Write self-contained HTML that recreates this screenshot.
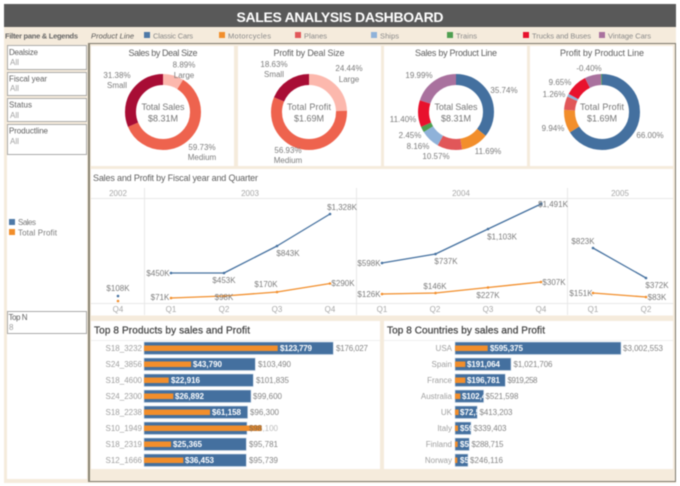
<!DOCTYPE html>
<html>
<head>
<meta charset="utf-8">
<style>
html,body{margin:0;padding:0;background:#fff;width:680px;height:486px;overflow:hidden}
svg{display:block;filter:blur(.4px)}
text{font-family:"Liberation Sans",sans-serif;font-size:8px;fill:#7c7c7c}
.c{text-anchor:middle}
.r{text-anchor:end}
.t{font-size:9px;fill:#5f5f5f}
.h{font-size:10px;fill:#444;stroke:#444;stroke-width:.25px}
.y{fill:#a8a8a8}
.f{fill:#5f5f5f}
.a{fill:#a0a0a0}
.w{fill:#fff;font-weight:bold;font-size:8px}
.l{fill:#a0a0a0}
.v{fill:#858585}
.k{font-size:9px;fill:#777}
.g{font-size:7.5px;fill:#888}
</style>
</head>
<body>
<svg width="680" height="486" viewBox="0 0 680 486" xmlns="http://www.w3.org/2000/svg">
<defs>
<clipPath id="c1"><rect x="455" y="390" width="28.5" height="13"/></clipPath>
<clipPath id="c2"><rect x="455" y="406" width="22" height="13"/></clipPath>
<clipPath id="c3"><rect x="455" y="422" width="16" height="13"/></clipPath>
<clipPath id="c4"><rect x="455" y="438" width="14" height="13"/></clipPath>
<clipPath id="c5"><rect x="455" y="454" width="13" height="13"/></clipPath>
</defs>
<rect width="680" height="486" fill="#fff"/>
<rect x="4" y="27" width="672" height="456" fill="#f5ebdc"/>
<rect x="4" y="4" width="672" height="23" fill="#595959"/>
<text x="340" y="22" class="c" style="font-size:14px;font-weight:bold;fill:#fff" textLength="207" lengthAdjust="spacing">SALES ANALYSIS DASHBOARD</text>

<!-- legend strip -->
<text x="5" y="38.500" style="font-size:7.5px;font-weight:bold;fill:#666" textLength="73">Filter pane &amp; Legends</text>
<text x="91" y="38.500" style="font-size:7.5px;font-style:italic;fill:#555" textLength="43">Product Line</text>
<rect x="144" y="32" width="6" height="6" fill="#4e79a7"/><text x="153" y="38.500" class="g" textLength="40">Classic Cars</text>
<rect x="219" y="32" width="6" height="6" fill="#f28e2b"/><text x="228" y="38.500" class="g" textLength="43">Motorcycles</text>
<rect x="295" y="32" width="6" height="6" fill="#e15759"/><text x="304" y="38.500" class="g" textLength="23">Planes</text>
<rect x="371" y="32" width="6" height="6" fill="#8fb2d9"/><text x="380" y="38.500" class="g" textLength="19">Ships</text>
<rect x="447" y="32" width="6" height="6" fill="#4e9f50"/><text x="456" y="38.500" class="g" textLength="21">Trains</text>
<rect x="523" y="32" width="6" height="6" fill="#e8112d"/><text x="532" y="38.500" class="g" textLength="59">Trucks and Buses</text>
<rect x="599" y="32" width="6" height="6" fill="#a9719e"/><text x="608" y="38.500" class="g" textLength="43">Vintage Cars</text>

<!-- left column -->
<rect x="7" y="45" width="80" height="434" fill="#fff"/>
<rect x="7.5" y="45.5" width="79" height="24" fill="#fff" stroke="#aaa"/>
<rect x="7" y="70" width="80" height="2" fill="#f5ebdc"/>
<rect x="7.5" y="72.5" width="79" height="23" fill="#fff" stroke="#aaa"/>
<rect x="7" y="96" width="80" height="2" fill="#f5ebdc"/>
<rect x="7.5" y="98.5" width="79" height="23" fill="#fff" stroke="#aaa"/>
<rect x="7" y="122" width="80" height="2" fill="#f5ebdc"/>
<rect x="7.5" y="124.5" width="79" height="30" fill="#fff" stroke="#aaa"/>
<text x="9" y="55" class="f" textLength="29">Dealsize</text><text x="10" y="65" class="a">All</text>
<text x="9" y="81.500" class="f" textLength="38">Fiscal  year</text><text x="10" y="91" class="a">All</text>
<text x="9" y="107.500" class="f" textLength="23">Status</text><text x="10" y="118" class="a">All</text>
<text x="9" y="133.500" class="f" textLength="39">Productline</text><text x="10" y="144" class="a">All</text>
<rect x="9" y="219" width="6" height="6" fill="#4e79a7"/><text x="18" y="225" textLength="18">Sales</text>
<rect x="9" y="229" width="6" height="6" fill="#f28e2b"/><text x="18" y="235.500" textLength="39">Total Profit</text>
<rect x="7.5" y="311.500" width="79" height="22" fill="#fff" stroke="#aaa"/>
<text x="8.500" y="320" class="f" textLength="19">Top N</text><text x="9" y="330" class="a">8</text>

<!-- main frame -->
<rect x="88.500" y="43.500" width="587" height="438" fill="#f5ebdc" stroke="#7d786c"/>
<rect x="88" y="43" width="2" height="439" fill="#8a8474"/>

<!-- donut panels -->
<rect x="91" y="46" width="143" height="120" fill="#fff"/>
<rect x="238" y="46" width="143" height="120" fill="#fff"/>
<rect x="384" y="46" width="143" height="120" fill="#fff"/>
<rect x="530" y="46" width="143" height="120" fill="#fff"/>

<g fill="none" stroke-width="11">
<g transform="rotate(-90 163 112)">
<circle cx="163" cy="112" r="32.500" pathLength="100" stroke="#fcb8ad" stroke-dasharray="8.89 91.11"/>
<circle cx="163" cy="112" r="32.500" pathLength="100" stroke="#ee634e" stroke-dasharray="59.73 40.27" stroke-dashoffset="-8.89"/>
<circle cx="163" cy="112" r="32.500" pathLength="100" stroke="#a80d35" stroke-dasharray="31.38 68.62" stroke-dashoffset="-68.62"/>
</g>
<g transform="rotate(-90 309 112)">
<circle cx="309" cy="112" r="32.500" pathLength="100" stroke="#fcb8ad" stroke-dasharray="24.44 75.56"/>
<circle cx="309" cy="112" r="32.500" pathLength="100" stroke="#ee634e" stroke-dasharray="56.93 43.07" stroke-dashoffset="-24.44"/>
<circle cx="309" cy="112" r="32.500" pathLength="100" stroke="#a80d35" stroke-dasharray="18.63 81.37" stroke-dashoffset="-81.37"/>
</g>
<g transform="rotate(-90 456 112)">
<circle cx="456" cy="112" r="32.500" pathLength="100" stroke="#44709f" stroke-dasharray="35.74 64.26"/>
<circle cx="456" cy="112" r="32.500" pathLength="100" stroke="#f28e2b" stroke-dasharray="11.69 88.31" stroke-dashoffset="-35.74"/>
<circle cx="456" cy="112" r="32.500" pathLength="100" stroke="#e15759" stroke-dasharray="10.57 89.43" stroke-dashoffset="-47.43"/>
<circle cx="456" cy="112" r="32.500" pathLength="100" stroke="#8fb2d9" stroke-dasharray="8.16 91.84" stroke-dashoffset="-58"/>
<circle cx="456" cy="112" r="32.500" pathLength="100" stroke="#4e9f50" stroke-dasharray="2.45 97.55" stroke-dashoffset="-66.16"/>
<circle cx="456" cy="112" r="32.500" pathLength="100" stroke="#e8112d" stroke-dasharray="11.4 88.6" stroke-dashoffset="-68.61"/>
<circle cx="456" cy="112" r="32.500" pathLength="100" stroke="#a9719e" stroke-dasharray="19.99 80.01" stroke-dashoffset="-80.01"/>
</g>
<g transform="rotate(-90 602 112)">
<circle cx="602" cy="112" r="32.500" pathLength="100" stroke="#44709f" stroke-dasharray="66 34"/>
<circle cx="602" cy="112" r="32.500" pathLength="100" stroke="#f28e2b" stroke-dasharray="9.94 90.06" stroke-dashoffset="-66"/>
<circle cx="602" cy="112" r="32.500" pathLength="100" stroke="#e15759" stroke-dasharray="5.75 94.25" stroke-dashoffset="-75.94"/>
<circle cx="602" cy="112" r="32.500" pathLength="100" stroke="#8fb2d9" stroke-dasharray="1.26 98.74" stroke-dashoffset="-81.69"/>
<circle cx="602" cy="112" r="32.500" pathLength="100" stroke="#e8112d" stroke-dasharray="9.65 90.35" stroke-dashoffset="-82.95"/>
<circle cx="602" cy="112" r="32.500" pathLength="100" stroke="#a9719e" stroke-dasharray="7 93" stroke-dashoffset="-92.6"/>
<circle cx="602" cy="112" r="32.500" pathLength="100" stroke="#4e9f50" stroke-dasharray="0.4 99.6" stroke-dashoffset="-99.6"/>
</g>
</g>

<text x="163" y="56" class="c t" textLength="69">Sales by Deal Size</text>
<text x="184" y="67.500" class="c">8.89%</text><text x="184" y="78" class="c">Large</text>
<text x="117" y="78" class="c">31.38%</text><text x="117" y="88" class="c">Small</text>
<text x="202" y="150" class="c">59.73%</text><text x="202" y="160" class="c">Medium</text>
<text x="163" y="110" class="c k" textLength="43">Total Sales</text><text x="163" y="121.500" class="c k">$8.31M</text>

<text x="309" y="56" class="c t" textLength="71">Profit by Deal Size</text>
<text x="274" y="67" class="c">18.63%</text><text x="274" y="77" class="c">Small</text>
<text x="349" y="71" class="c">24.44%</text><text x="349" y="82" class="c">Large</text>
<text x="288" y="153" class="c">56.93%</text><text x="288" y="163" class="c">Medium</text>
<text x="309" y="110" class="c k" textLength="44">Total Profit</text><text x="309" y="121.500" class="c k">$1.69M</text>

<text x="456" y="56" class="c t" textLength="82">Sales by Product Line</text>
<text x="419" y="78" class="c">19.99%</text>
<text x="504" y="93" class="c">35.74%</text>
<text x="403" y="122" class="c">11.40%</text>
<text x="410" y="138" class="c">2.45%</text>
<text x="418" y="149" class="c">8.16%</text>
<text x="436" y="159" class="c">10.57%</text>
<text x="488" y="154" class="c">11.69%</text>
<text x="456" y="110" class="c k" textLength="43">Total Sales</text><text x="456" y="121.500" class="c k">$8.31M</text>

<text x="602" y="56" class="c t" textLength="84">Profit by Product Line</text>
<text x="589" y="71" class="c">-0.40%</text>
<text x="560" y="85" class="c">9.65%</text>
<text x="554" y="97" class="c">1.26%</text>
<text x="553" y="131" class="c">9.94%</text>
<text x="650" y="138" class="c">66.00%</text>
<text x="602" y="110" class="c k" textLength="44">Total Profit</text><text x="602" y="121.500" class="c k">$1.69M</text>

<!-- line panel -->
<rect x="91" y="169" width="582" height="146.500" fill="#fff"/>
<text x="93" y="181" class="t" textLength="165">Sales and Profit by Fiscal year and Quarter</text>
<g stroke="#e8e8e8" stroke-width="1">
<line x1="91" y1="198.500" x2="673" y2="198.500"/>
<line x1="91" y1="303.500" x2="673" y2="303.500"/>
<line x1="144.500" y1="188" x2="144.500" y2="315"/>
<line x1="356.500" y1="188" x2="356.500" y2="315"/>
<line x1="567.500" y1="188" x2="567.500" y2="315"/>
</g>
<text x="118" y="196" class="c y">2002</text>
<text x="250" y="196" class="c y">2003</text>
<text x="461" y="196" class="c y">2004</text>
<text x="620" y="196" class="c y">2005</text>
<g class="qs">
<text x="118" y="312" class="c y">Q4</text>
<text x="171" y="312" class="c y">Q1</text>
<text x="224" y="312" class="c y">Q2</text>
<text x="277" y="312" class="c y">Q3</text>
<text x="330" y="312" class="c y">Q4</text>
<text x="382" y="312" class="c y">Q1</text>
<text x="435" y="312" class="c y">Q2</text>
<text x="488" y="312" class="c y">Q3</text>
<text x="541" y="312" class="c y">Q4</text>
<text x="593" y="312" class="c y">Q1</text>
<text x="646" y="312" class="c y">Q2</text>
</g>
<g fill="none" stroke-width="1.300" stroke-linejoin="round">
<polyline points="171,273 224,273 277,246 330,214" stroke="#44709f"/>
<polyline points="382,263 435.500,254 488,229 541,204" stroke="#44709f"/>
<polyline points="593,248 646,278" stroke="#44709f"/>
<polyline points="171,298 224,296 277,292 330,283.500" stroke="#f28e2b"/>
<polyline points="382,294 435.500,293 488,287.500 541,282" stroke="#f28e2b"/>
<polyline points="593,293 646,297" stroke="#f28e2b"/>
</g>
<g fill="#44709f">
<circle cx="118" cy="296" r="1.300"/><circle cx="171" cy="273" r="1.300"/><circle cx="224" cy="273" r="1.300"/><circle cx="277" cy="246" r="1.300"/><circle cx="330" cy="214" r="1.300"/>
<circle cx="382" cy="263" r="1.300"/><circle cx="435.500" cy="254" r="1.300"/><circle cx="488" cy="229" r="1.300"/><circle cx="541" cy="204" r="1.600"/><circle cx="593" cy="248" r="1.300"/><circle cx="646" cy="278" r="1.300"/>
</g>
<g fill="#f28e2b">
<circle cx="118" cy="301" r="1.300"/><circle cx="171" cy="298" r="1.300"/><circle cx="224" cy="296" r="1.300"/><circle cx="277" cy="292" r="1.300"/><circle cx="330" cy="283.500" r="1.300"/>
<circle cx="382" cy="294" r="1.300"/><circle cx="435.500" cy="293" r="1.300"/><circle cx="488" cy="287.500" r="1.300"/><circle cx="541" cy="282" r="1.300"/><circle cx="593" cy="293" r="1.300"/><circle cx="646" cy="297" r="1.300"/>
</g>
<g>
<text x="118" y="291" class="c">$108K</text>
<text x="158" y="276" class="c">$450K</text>
<text x="224" y="283" class="c">$453K</text>
<text x="288" y="256" class="c">$843K</text>
<text x="342" y="210" class="c">$1,328K</text>
<text x="160" y="300" class="c">$71K</text>
<text x="224" y="300" class="c">$98K</text>
<text x="266" y="287" class="c">$170K</text>
<text x="343" y="286" class="c">$290K</text>
<text x="369" y="266" class="c">$598K</text>
<text x="446" y="264" class="c">$737K</text>
<text x="502" y="239.500" class="c">$1,103K</text>
<text x="553" y="207" class="c">$1,491K</text>
<text x="369" y="297" class="c">$126K</text>
<text x="435" y="289" class="c">$146K</text>
<text x="488" y="298" class="c">$227K</text>
<text x="554" y="285" class="c">$307K</text>
<text x="583" y="244" class="c">$823K</text>
<text x="657" y="288" class="c">$372K</text>
<text x="581" y="296" class="c">$151K</text>
<text x="657" y="300" class="c">$83K</text>
</g>

<!-- bottom panels -->
<rect x="91" y="321" width="289" height="148" fill="#fff"/>
<rect x="384" y="321" width="289" height="148" fill="#fff"/>
<line x1="91" y1="340.500" x2="380" y2="340.500" stroke="#f0f0f0"/>
<line x1="384" y1="340.500" x2="673" y2="340.500" stroke="#f0f0f0"/>
<text x="94" y="333.500" class="h" textLength="156">Top 8  Products by sales and Profit</text>
<text x="387" y="333.500" class="h" textLength="158">Top 8 Countries by sales and Profit</text>

<g fill="#44709f" stroke="#cfdcea" stroke-width=".6">
<rect x="144" y="342" width="189.300" height="12.500"/>
<rect x="144" y="358" width="111.300" height="12.500"/>
<rect x="144" y="374" width="109.300" height="12.500"/>
<rect x="144" y="390" width="107" height="12.500"/>
<rect x="144" y="406" width="103.700" height="12.500"/>
<rect x="144" y="422" width="103" height="12.500"/>
<rect x="144" y="438" width="102.300" height="12.500"/>
<rect x="144" y="454" width="102.300" height="12.500"/>
<rect x="455" y="342" width="166" height="12.500"/>
<rect x="455" y="358" width="56" height="12.500"/>
<rect x="455" y="374" width="50.300" height="12.500"/>
<rect x="455" y="390" width="28.700" height="12.500"/>
<rect x="455" y="406" width="22.300" height="12.500"/>
<rect x="455" y="422" width="16" height="12.500"/>
<rect x="455" y="438" width="14.300" height="12.500"/>
<rect x="455" y="454" width="13" height="12.500"/>
</g>
<g fill="#f28e2b">
<rect x="144" y="345.500" width="133.700" height="5.500"/>
<rect x="144" y="361.500" width="47" height="5.500"/>
<rect x="144" y="377.500" width="24.700" height="5.500"/>
<rect x="144" y="393.500" width="29.300" height="5.500"/>
<rect x="144" y="409.500" width="66" height="5.500"/>
<rect x="144" y="425.500" width="117.700" height="5.500"/>
<rect x="144" y="441.500" width="27" height="5.500"/>
<rect x="144" y="457.500" width="39.300" height="5.500"/>
<rect x="455" y="345.500" width="32.700" height="5.500"/>
<rect x="455" y="361.500" width="10.300" height="5.500"/>
<rect x="455" y="377.500" width="10.300" height="5.500"/>
<rect x="455" y="393.500" width="5.300" height="5.500"/>
<rect x="455" y="409.500" width="3.700" height="5.500"/>
<rect x="455" y="425.500" width="3" height="5.500"/>
<rect x="455" y="441.500" width="2.700" height="5.500"/>
<rect x="455" y="457.500" width="2.300" height="5.500"/>
</g>

<g class="lbl">
<text x="142" y="351" class="r l">S18_3232</text>
<text x="142" y="367" class="r l">S24_3856</text>
<text x="142" y="383" class="r l">S18_4600</text>
<text x="142" y="399" class="r l">S24_2300</text>
<text x="142" y="415" class="r l">S18_2238</text>
<text x="142" y="431" class="r l">S10_1949</text>
<text x="142" y="447" class="r l">S18_2319</text>
<text x="142" y="463" class="r l">S12_1666</text>
<text x="280" y="351" class="w" textLength="32">$123,779</text>
<text x="193" y="367" class="w" textLength="29">$43,790</text>
<text x="171" y="383" class="w" textLength="29">$22,916</text>
<text x="175" y="399" class="w" textLength="29">$26,892</text>
<text x="212" y="415" class="w" textLength="29">$61,158</text>
<text x="249" y="431" style="fill:#b3691c;font-weight:bold" textLength="13">$98</text>
<text x="173" y="447" class="w" textLength="29">$25,365</text>
<text x="185" y="463" class="w" textLength="29">$36,453</text>
<text x="336" y="351" class="v" textLength="32">$176,027</text>
<text x="258" y="367" class="v" textLength="33">$103,490</text>
<text x="256" y="383" class="v" textLength="33">$101,835</text>
<text x="253" y="399" class="v" textLength="29">$99,600</text>
<text x="250" y="415" class="v" textLength="29">$96,300</text>
<text x="249" y="431" class="v" style="opacity:.55" textLength="29">$96,100</text>
<text x="249" y="447" class="v" textLength="29">$95,781</text>
<text x="249" y="463" class="v" textLength="29">$95,739</text>

<text x="452" y="351" class="r l">USA</text>
<text x="452" y="367" class="r l">Spain</text>
<text x="452" y="383" class="r l">France</text>
<text x="452" y="399" class="r l">Australia</text>
<text x="452" y="415" class="r l">UK</text>
<text x="452" y="431" class="r l">Italy</text>
<text x="452" y="447" class="r l">Finland</text>
<text x="452" y="463" class="r l">Norway</text>
<text x="490" y="351" class="w" textLength="33">$595,375</text>
<text x="467" y="367" class="w" textLength="33">$191,064</text>
<text x="467" y="383" class="w" textLength="33">$196,781</text>
<text x="462" y="399" class="w" textLength="33" clip-path="url(#c1)">$102,416</text>
<text x="460" y="415" class="w" textLength="29" clip-path="url(#c2)">$72,545</text>
<text x="460" y="431" class="w" textLength="29" clip-path="url(#c3)">$59,163</text>
<text x="460" y="447" class="w" textLength="29" clip-path="url(#c4)">$57,401</text>
<text x="460" y="463" class="w" textLength="29" clip-path="url(#c5)">$54,529</text>
<text x="623" y="351" class="v" textLength="40">$3,002,553</text>
<text x="513.500" y="367" class="v" textLength="39">$1,021,706</text>
<text x="507.500" y="383" class="v" textLength="30">$919,258</text>
<text x="485.500" y="399" class="v" textLength="33">$521,598</text>
<text x="479.500" y="415" class="v" textLength="33">$413,203</text>
<text x="473.500" y="431" class="v" textLength="33">$339,403</text>
<text x="471.500" y="447" class="v" textLength="32">$288,715</text>
<text x="470" y="463" class="v" textLength="33">$246,116</text>
</g>
</svg>
</body>
</html>
